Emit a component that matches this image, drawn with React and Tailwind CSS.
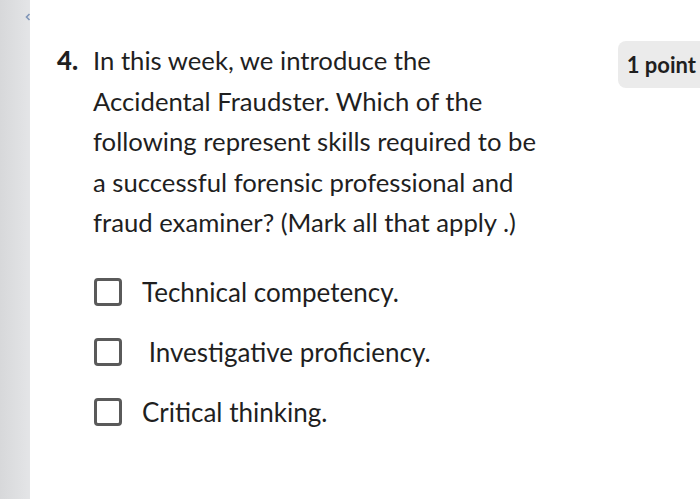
import React from 'react';

const options = ['Technical competency.', '\u00a0Investigative proficiency.', 'Critical thinking.'];

const App = () => {
  return (
    <div className="flex h-[499px] w-[700px] overflow-hidden bg-white" style={{ fontFamily: '"Lato", "Open Sans", sans-serif' }}>
      {/* Left gutter */}
      <div className="relative h-full w-[30px] shrink-0 bg-gradient-to-r from-[#d7d8da] to-[#e4e5e7]">
        <svg className="absolute left-[25px] top-[13px]" width="6" height="8" viewBox="0 0 6 8">
          <path d="M4.5 1 L1.5 4 L4.5 7" fill="none" stroke="#7f95b8" strokeWidth="1.6" />
        </svg>
      </div>

      <div className="flex flex-1 pl-[27px] pt-[40px]">
        <div className="flex-1">
          <div className="flex text-[25.7px] leading-[40.5px] text-[#1f1f1f]">
            <span className="w-[36px] shrink-0 font-black">4.</span>
            <p className="w-[450px]">
              In this week, we introduce the Accidental Fraudster. Which of the following represent skills required to be a successful forensic professional and fraud examiner? (Mark all that apply .)
            </p>
          </div>

          <div className="ml-[37px] mt-[35px] flex flex-col gap-[32px]">
            {options.map((opt) => (
              <label key={opt} className="flex items-center gap-[20px] text-[26px] leading-[28px] text-[#1f1f1f]">
                <span className="h-[28px] w-[28px] shrink-0 rounded-[4px] border-[3px] border-[#5a5a5a]" />
                <span>{opt}</span>
              </label>
            ))}
          </div>
        </div>

        <div className="pt-[1px]">
          <span className="block rounded-l-[8px] bg-[#ebebeb] py-[10px] pl-[9px] pr-[4px] text-[22px] font-bold leading-[27px] text-[#1f1f1f]">
            1 point
          </span>
        </div>
      </div>
    </div>
  );
};

export default App;
